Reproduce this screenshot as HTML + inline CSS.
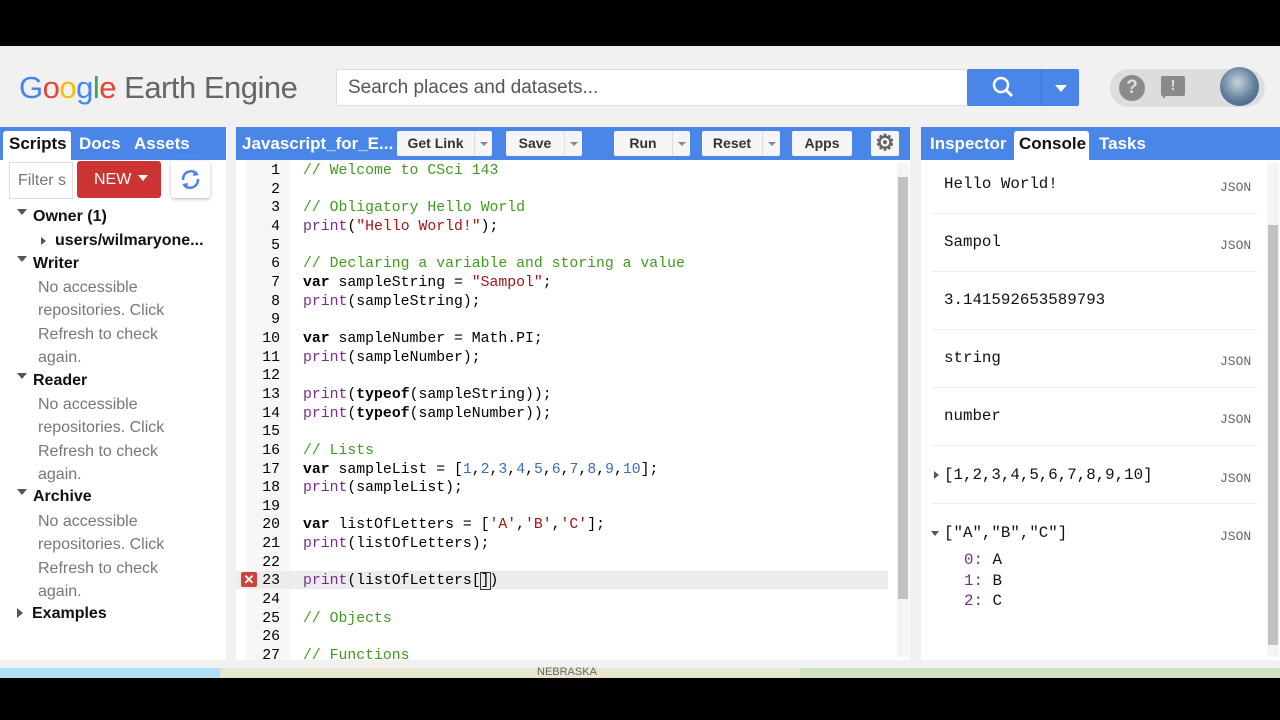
<!DOCTYPE html>
<html><head><meta charset="utf-8"><style>
*{margin:0;padding:0;box-sizing:border-box}
body{width:1280px;height:720px;overflow:hidden;background:#000;font-family:"Liberation Sans",sans-serif;position:relative}
.a{position:absolute}
.mono{font-family:"Liberation Mono",monospace}
.btn{position:absolute;top:131px;height:25px;background:#f5f5f5;border-radius:2px;font-size:14px;font-weight:bold;color:#333;line-height:25px;text-align:center}
.btn .dd{position:absolute;right:0;top:0;width:18px;height:25px;border-left:1px solid #ddd}
.btn .dd:after{content:"";position:absolute;left:5px;top:11px;border:4px solid transparent;border-top:4px solid #888}
.code{position:absolute;left:303px;top:162px;font-size:14.8px;line-height:18.65px;white-space:pre;color:#000}
.ln{position:absolute;left:240px;width:40px;top:162px;font-size:14.8px;line-height:18.65px;text-align:right;white-space:pre;color:#000}
.c{color:#3f9b1f}.k{font-weight:bold}.p{color:#7b2c8b}.s{color:#a31515}.n{color:#3a6bc4}
.tree{font-size:16px;color:#111;font-weight:bold}
.g{color:#777;font-size:16px;line-height:23.4px}
.tri{display:inline-block;width:0;height:0;border:5px solid transparent;border-top:6px solid #555;margin-right:6px;vertical-align:1px}
.trir{display:inline-block;width:0;height:0;border:5px solid transparent;border-left:6px solid #555;margin-right:4px}
.ce{position:absolute;left:944px;font-size:15.8px;color:#111;font-family:"Liberation Mono",monospace}
.js{position:absolute;left:1220px;font-size:13px;color:#666;font-family:"Liberation Mono",monospace}
.sep{position:absolute;left:932px;width:325px;height:1px;background:#eee}
</style></head><body>
<div class="a" style="left:0;top:46px;width:1280px;height:632px;background:#f1f1f1"></div>
<div class="a" style="left:19px;top:70px;font-size:31px;letter-spacing:-0.5px"><span style="color:#4285f4">G</span><span style="color:#ea4335">o</span><span style="color:#fbbc05">o</span><span style="color:#4285f4">g</span><span style="color:#34a853">l</span><span style="color:#ea4335">e</span> <span style="color:#666">Earth Engine</span></div>
<div class="a" style="left:336px;top:69px;width:632px;height:37px;background:#fff;border:1px solid #ddd;font-size:19px;color:#555;line-height:35px;padding-left:11px">Search places and datasets...</div>
<div class="a" style="left:967px;top:69px;width:74px;height:37px;background:#4a86e8;border-radius:2px 0 0 2px"><svg width="74" height="37"><circle cx="34" cy="16" r="7" stroke="#fff" stroke-width="2.5" fill="none"/><line x1="39" y1="21" x2="45" y2="27" stroke="#fff" stroke-width="3"/></svg></div>
<div class="a" style="left:1041px;top:69px;width:38px;height:37px;background:#4a86e8;border-left:1px solid #3a74d4;border-radius:0 2px 2px 0"><div class="a" style="left:13px;top:16px;border:6px solid transparent;border-top:7px solid #fff"></div></div>
<div class="a" style="left:1110px;top:69px;width:155px;height:38px;background:#ddd;border-radius:19px"></div>
<div class="a" style="left:1119px;top:75px;width:26px;height:26px;border-radius:50%;background:#8a8a8a;color:#ddd;font-weight:bold;font-size:19px;text-align:center;line-height:26px">?</div>
<div class="a" style="left:1161px;top:76px;width:24px;height:20px;background:#8a8a8a;border-radius:2px;color:#ddd;font-weight:bold;font-size:15px;text-align:center;line-height:20px">!</div>
<div class="a" style="left:1163px;top:94px;border:5px solid transparent;border-top:5px solid #8a8a8a;border-left:0"></div>
<div class="a" style="left:1220px;top:67px;width:39px;height:39px;border-radius:50%;background:radial-gradient(circle at 45% 40%,#c9d3db,#5f7e9c 55%,#34557a)"></div>
<div class="a" style="left:0;top:127px;width:226px;height:33px;background:#4a86e8"></div>
<div class="a" style="left:3px;top:131px;width:68px;height:29px;background:#fff;border-radius:3px 3px 0 0"></div>
<div class="a" style="left:9px;top:134px;font-size:17px;font-weight:bold;color:#111">Scripts</div>
<div class="a" style="left:79px;top:134px;font-size:17px;font-weight:bold;color:#fff">Docs</div>
<div class="a" style="left:134px;top:134px;font-size:17px;font-weight:bold;color:#fff">Assets</div>
<div class="a" style="left:0;top:160px;width:226px;height:500px;background:#fff"></div>
<div class="a" style="left:9px;top:162px;width:64px;height:37px;border:1px solid #ddd;font-size:16px;color:#777;line-height:35px;padding-left:8px;overflow:hidden;white-space:nowrap">Filter s</div>
<div class="a" style="left:77px;top:161px;width:84px;height:37px;background:#cc3333;border-radius:3px;color:#fff;font-size:16px;line-height:37px;padding-left:17px">NEW<span style="display:inline-block;margin-left:7px;border:5px solid transparent;border-top:6px solid #fff;vertical-align:-2px"></span></div>
<div class="a" style="left:171px;top:161px;width:39px;height:37px;background:#fff;border-radius:3px;box-shadow:0 1px 3px rgba(0,0,0,.3)"><svg width="39" height="37"><path d="M12 19 A8 8 0 0 1 26 13" stroke="#4a86e8" stroke-width="2.5" fill="none"/><path d="M23 9 L28 14 L22 15Z" fill="#4a86e8"/><path d="M27 18 A8 8 0 0 1 13 24" stroke="#4a86e8" stroke-width="2.5" fill="none"/><path d="M16 28 L11 23 L17 22Z" fill="#4a86e8"/></svg></div>
<div class="a tree" style="left:17px;top:208px"><span class="tri"></span>Owner (1)</div>
<div class="a tree" style="left:41px;top:232px"><span class="trir" style="border-width:4px 5px"></span>users/wilmaryone...</div>
<div class="a tree" style="left:17px;top:255px"><span class="tri"></span>Writer</div>
<div class="a g" style="left:38px;top:276px">No accessible<br>repositories. Click<br>Refresh to check<br>again.</div>
<div class="a tree" style="left:17px;top:372px"><span class="tri"></span>Reader</div>
<div class="a g" style="left:38px;top:393px">No accessible<br>repositories. Click<br>Refresh to check<br>again.</div>
<div class="a tree" style="left:17px;top:488px"><span class="tri"></span>Archive</div>
<div class="a g" style="left:38px;top:510px">No accessible<br>repositories. Click<br>Refresh to check<br>again.</div>
<div class="a tree" style="left:17px;top:605px"><span class="trir"></span>Examples</div>
<div class="a" style="left:236px;top:127px;width:674px;height:33px;background:#4a86e8"></div>
<div class="a" style="left:242px;top:134px;font-size:17px;font-weight:bold;color:#fff">Javascript_for_E...</div>
<div class="btn" style="left:397px;width:95px;padding-right:18px">Get Link<div class="dd"></div></div>
<div class="btn" style="left:506px;width:76px;padding-right:18px">Save<div class="dd"></div></div>
<div class="btn" style="left:614px;width:76px;padding-right:18px">Run<div class="dd"></div></div>
<div class="btn" style="left:702px;width:78px;padding-right:18px">Reset<div class="dd"></div></div>
<div class="btn" style="left:792px;width:60px">Apps</div>
<div class="btn" style="left:871px;width:28px;font-size:22px;color:#666;line-height:24px">⚙</div>
<div class="a" style="left:236px;top:160px;width:674px;height:500px;background:#fff"></div>
<div class="a" style="left:236px;top:160px;width:54px;height:500px;background:#f7f7f7;border-left:10px solid #fff"></div>
<div class="a" style="left:236px;top:571px;width:652px;height:18px;background:#ececec"></div>
<div class="a" style="left:241px;top:572px;width:16px;height:15px;background:#c9443b;border-radius:2px;color:#fff;font-size:13px;font-weight:bold;text-align:center;line-height:15px">✕</div>
<div class="ln mono">1
2
3
4
5
6
7
8
9
10
11
12
13
14
15
16
17
18
19
20
21
22
23
24
25
26
27</div>
<div class="code mono"><span class="c">// Welcome to CSci 143</span>

<span class="c">// Obligatory Hello World</span>
<span class="p">print</span>(<span class="s">"Hello World!"</span>);

<span class="c">// Declaring a variable and storing a value</span>
<span class="k">var</span> sampleString = <span class="s">"Sampol"</span>;
<span class="p">print</span>(sampleString);

<span class="k">var</span> sampleNumber = Math.PI;
<span class="p">print</span>(sampleNumber);

<span class="p">print</span>(<span class="k">typeof</span>(sampleString));
<span class="p">print</span>(<span class="k">typeof</span>(sampleNumber));

<span class="c">// Lists</span>
<span class="k">var</span> sampleList = [<span class="n">1</span>,<span class="n">2</span>,<span class="n">3</span>,<span class="n">4</span>,<span class="n">5</span>,<span class="n">6</span>,<span class="n">7</span>,<span class="n">8</span>,<span class="n">9</span>,<span class="n">10</span>];
<span class="p">print</span>(sampleList);

<span class="k">var</span> listOfLetters = [<span class="s">'A'</span>,<span class="s">'B'</span>,<span class="s">'C'</span>];
<span class="p">print</span>(listOfLetters);

<span class="p">print</span>(listOfLetters[<span style="outline:1px solid #333">]</span>)

<span class="c">// Objects</span>

<span class="c">// Functions</span></div>
<div class="a" style="left:897px;top:163px;width:12px;height:494px;background:#f5f5f5"></div>
<div class="a" style="left:898px;top:177px;width:10px;height:422px;background:#c1c1c1"></div>
<div class="a" style="left:921px;top:127px;width:359px;height:33px;background:#4a86e8"></div>
<div class="a" style="left:1014px;top:131px;width:75px;height:29px;background:#fff;border-radius:3px 3px 0 0"></div>
<div class="a" style="left:930px;top:134px;font-size:17px;font-weight:bold;color:#fff">Inspector</div>
<div class="a" style="left:1019px;top:134px;font-size:17px;font-weight:bold;color:#111">Console</div>
<div class="a" style="left:1099px;top:134px;font-size:17px;font-weight:bold;color:#fff">Tasks</div>
<div class="a" style="left:921px;top:160px;width:359px;height:500px;background:#fff"></div>
<div class="a" style="left:1267px;top:163px;width:12px;height:494px;background:#f5f5f5"></div>
<div class="a" style="left:1268px;top:225px;width:10px;height:420px;background:#c1c1c1"></div>
<div class="ce" style="top:175px">Hello World!</div><div class="js" style="top:180px">JSON</div>
<div class="sep" style="top:213px"></div>
<div class="ce" style="top:233px">Sampol</div><div class="js" style="top:238px">JSON</div>
<div class="sep" style="top:271px"></div>
<div class="ce" style="top:291px">3.141592653589793</div>
<div class="sep" style="top:329px"></div>
<div class="ce" style="top:349px">string</div><div class="js" style="top:354px">JSON</div>
<div class="sep" style="top:387px"></div>
<div class="ce" style="top:407px">number</div><div class="js" style="top:412px">JSON</div>
<div class="sep" style="top:445px"></div>
<div class="a" style="left:934px;top:471px;border:4px solid transparent;border-left:5px solid #555"></div>
<div class="ce" style="top:466px">[1,2,3,4,5,6,7,8,9,10]</div><div class="js" style="top:471px">JSON</div>
<div class="sep" style="top:503px"></div>
<div class="a" style="left:931px;top:531px;border:4px solid transparent;border-top:5px solid #555"></div>
<div class="ce" style="top:524px">["A","B","C"]</div><div class="js" style="top:529px">JSON</div>
<div class="ce" style="left:964px;top:550px;line-height:20.5px"><span style="color:#7b2c8b">0:</span> A<br><span style="color:#7b2c8b">1:</span> B<br><span style="color:#7b2c8b">2:</span> C</div>
<div class="a" style="left:0;top:660px;width:1280px;height:8px;background:#f1f1f1"></div>
<div class="a" style="left:0;top:668px;width:1280px;height:10px;background:linear-gradient(90deg,#aee0f5 0 220px,#e8e6d0 220px 800px,#cfe3c2 800px 1280px)"></div>
<div class="a" style="left:537px;top:666px;font-size:11px;color:#666">NEBRASKA</div>
</body></html>
